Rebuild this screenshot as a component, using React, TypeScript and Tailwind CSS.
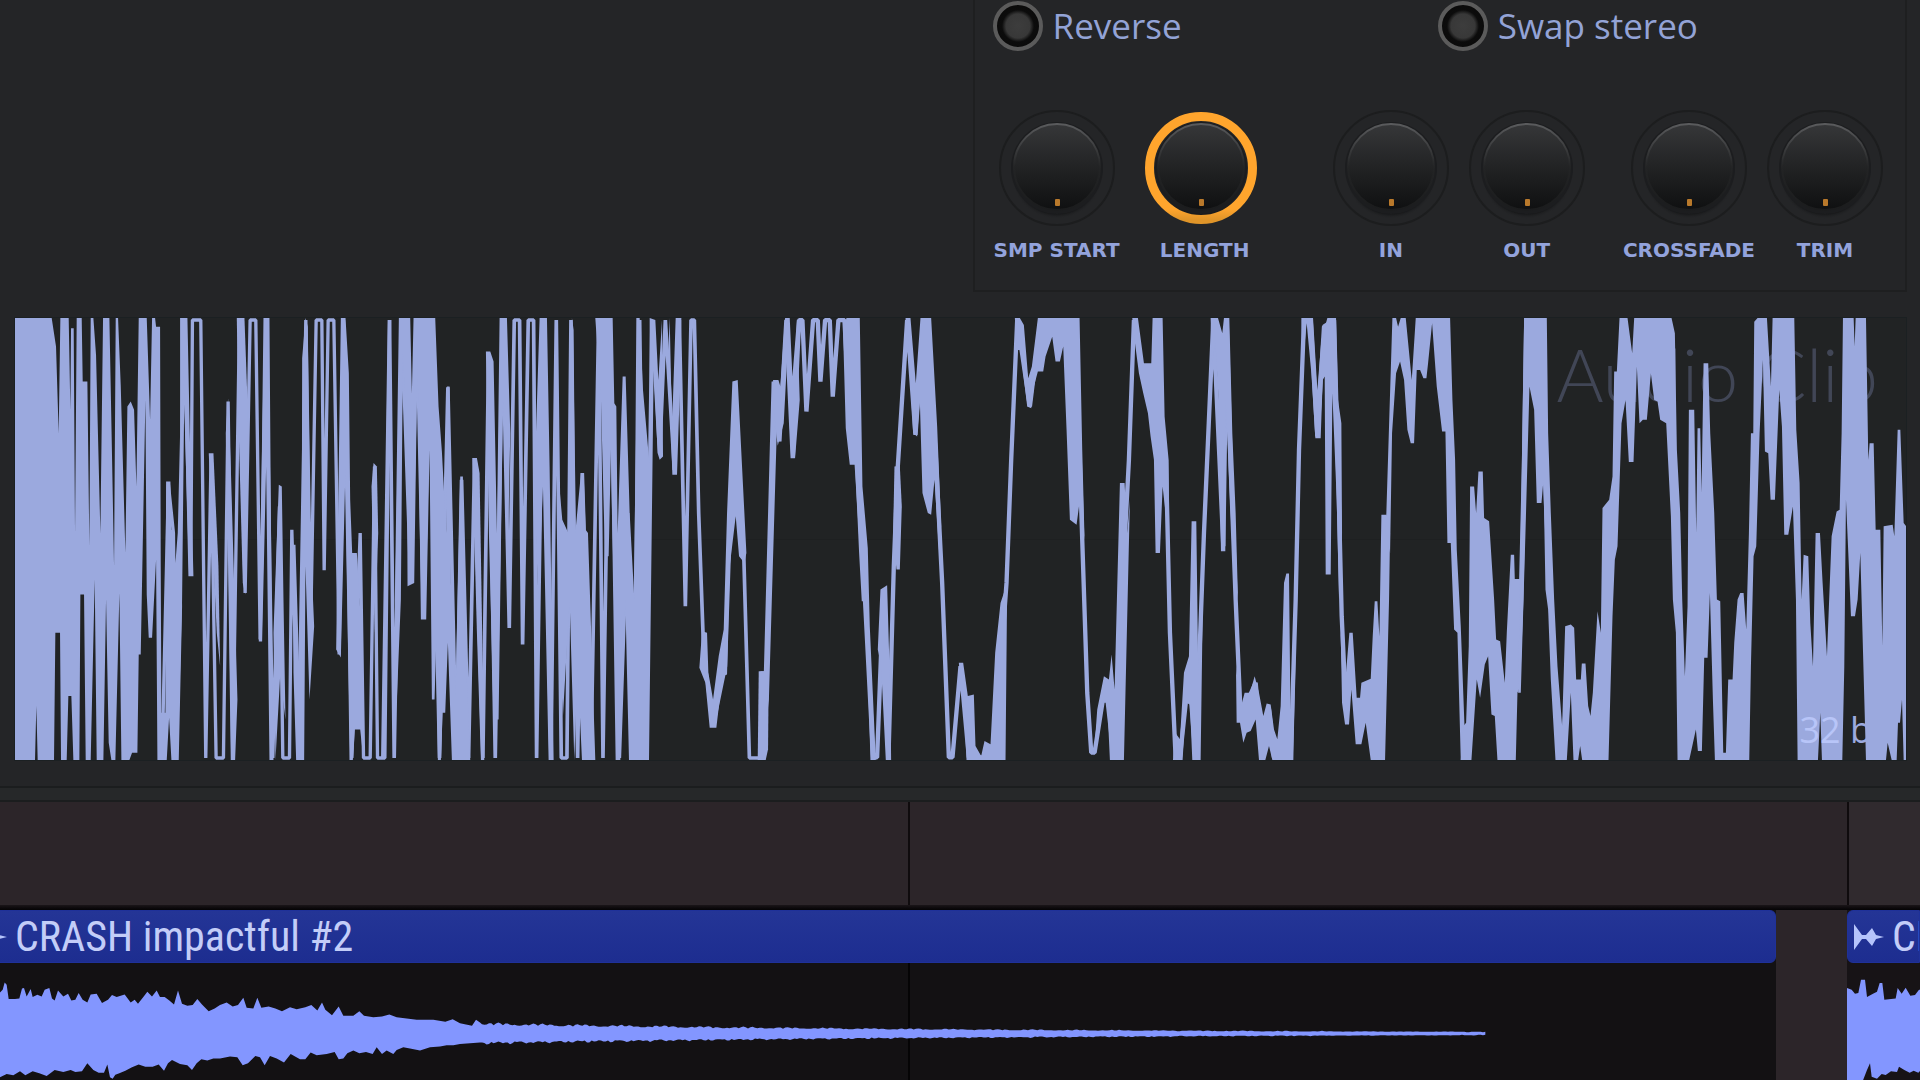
import { useState } from 'react';
import { clsx } from 'clsx';

interface KnobProps {
  label: string;
  active?: boolean;
}

interface WaveSegment {
  x: number;
  stroke: number;
  lines: string;
  shapes: string[];
}

// Sample preview, drawn at three units per pixel. Each segment has its own origin.
const SEGMENTS: WaveSegment[] = [
  {
    x: 0,
    stroke: 10,
    lines:
      '486,1376 505,555 520,700 528,1376 541,900 550,60 572,825 577,60 602,60 617,1376 633,465 648,1376 670,1376 684,305 698,1376 718,60 735,880 750,60 767,60 780,1020 798,60 818,1376 838,620 848,1376 868,1376 875,690 895,1376 917,60 932,960 948,60 965,60 972,812 984,60 1001,60 1017,1065 1030,60 1055,1376 1080,700 1090,1376 1110,1376 1123,500 1132,1376 1154,1376 1168,60',
    shapes: [
      '45,54 155,54 168,140 176,400 181,54 206,54 211,330 213,85 221,85 225,700 230,54 245,54 248,245 262,245 268,740 272,54 280,54 288,165 301,700 309,54 328,54 335,420 342,800 347,54 354,54 362,255 376,760 382,320 392,305 402,330 409,560 416,54 440,54 450,360 456,54 465,54 468,80 480,80 482,800 484,1240 496,1240 498,545 511,545 514,690 519,690 526,790 533,700 540,400 546,920 536,1382 514,1382 507,1255 500,1382 472,1382 468,780 456,1015 446,1015 440,885 436,300 422,1065 416,1065 412,1360 396,1360 388,1382 364,1382 358,880 346,1382 334,1382 326,1330 318,900 310,1382 290,1382 284,840 272,1382 257,1382 252,885 241,885 238,1382 220,1382 214,1190 205,1190 200,1382 183,1382 180,1000 166,1000 162,1382 113,1382 109,1220 105,1382 45,1382',
      '540,54 562,54 569,400 580,830 565,830 550,160 545,700 540,700',
      '626,460 640,460 655,800 660,1100 650,1000 636,700',
      '677,400 684,295 692,500 712,1200 705,1382 692,1382 684,800',
      '710,54 733,54 742,300 740,700 736,885 728,850 716,400',
      '790,54 808,54 814,900 820,1382 808,1382 798,500 786,1026 776,1026 780,900',
      '836,555 845,560 850,900 856,1260 840,1130 826,1382 820,1000',
      '878,735 886,735 897,1100 905,650 906,175 916,54 923,80 930,700 942,980 928,1200 916,800 912,1382 888,1382 880,1120',
      '1022,54 1036,54 1046,220 1050,600 1056,760 1070,760 1084,1000 1090,1382 1080,1290 1064,1290 1058,1382 1048,1382 1036,500 1022,1074 1008,1050',
      '1114,560 1120,490 1130,500 1134,700 1124,1000',
    ],
  },
  {
    x: 380,
    stroke: 11,
    lines:
      '8,1376 28,60 42,1376 65,60 92,850 110,60 130,950 150,60 178,1376 203,262 228,1376 244,540 265,1376 283,480 308,1376 325,160 345,1376 367,60 387,985 402,60 418,60 427,1035 444,60 460,60 469,1376 488,60 512,1376 528,60 543,1376 560,1376 572,60 592,1376 606,520 632,1376 655,60 668,1376 688,60 717,1376 742,640 758,1376 778,60 795,1376 815,60 838,460 855,60 882,510 897,60 915,920 932,60 942,60 955,640 970,1060 998,1280 1035,1100 1045,800 1064,300 1090,760 1107,1376 1140,1376 1160,1200 1188,245',
    shapes: [
      '56,54 90,54 95,280 100,54 165,54 175,320 185,455 198,700 200,260 208,260 212,850 226,1190 240,530 248,530 252,960 270,1382 215,1382 203,1030 195,1240 187,1240 182,1382 173,1382 168,1030 163,1200 155,1200 148,450 138,960 122,960 112,150 102,850 82,860 80,400 68,160 62,900 50,1200 44,900',
      '276,475 290,475 298,520 312,1382 302,1382 290,1000',
      '317,155 330,155 340,185 350,700 358,54 380,54 390,400 384,700 368,300 355,1260 340,1260 326,700',
      '478,54 500,54 508,500 520,1382 505,1382 488,560 474,900 462,560',
      '532,500 546,660 564,700 575,54 580,90 585,700 602,520 610,520 616,690 623,700 645,1382 605,1382 592,1100 582,1382 568,900 548,1250 535,1000',
      '645,54 697,54 702,310 708,320 712,700 727,230 736,230 748,640 762,900 768,54 778,54 788,270 808,500 808,54 825,60 834,240 845,60 848,470 838,480 832,460 820,200 806,1382 746,1382 735,900 720,1382 706,1382 692,450 685,770 674,770 662,300',
      '868,54 875,380 886,54 903,54 900,220 890,525 876,525 864,160',
      '965,995 980,1000 984,1120 998,1200 1015,1070 1030,990 1040,640 1056,245 1072,240 1088,560 1098,760 1092,790 1076,770 1066,650 1048,800 1040,1125 1026,1130 1008,1285 988,1285 975,1150 957,1105',
      '1135,1115 1165,1115 1163,1350 1156,1382 1132,1382',
    ],
  },
  {
    x: 760,
    stroke: 13,
    lines:
      '10,1374 40,245 57,425 78,60 97,475 116,60 126,60 138,335 158,60 172,60 180,245 194,60 208,60 217,290 234,60 252,60 265,300 288,480 310,830 338,1374 350,1374 368,900 384,1374 400,800 412,500 440,60 465,405 490,60 525,450 545,850 565,1374 576,1374 600,1100 625,1374 700,1374 738,850 752,480 770,60 808,320 840,60 905,60 955,400 965,720 980,1180 992,1360 1002,1360 1035,1150 1060,1374 1085,860 1105,480 1120,60',
    shapes: [
      '0,1115 14,1115 26,700 20,1350 12,1382 0,1382',
      '38,240 54,240 60,260 74,54 88,54 96,230 110,54 118,300 104,475 92,475 80,180 70,370 52,438 40,330',
      '258,54 298,54 306,560 322,745 328,980 346,1382 330,1382 316,905 304,905 296,760 284,495 268,495 256,385 248,100',
      '352,1050 360,870 380,857 390,1200 392,1382 376,1382 362,1100',
      '402,500 418,498 424,620 418,810 408,810 398,700',
      '435,54 450,54 466,250 480,54 512,54 530,380 542,680 536,760 522,540 512,645 502,640 486,580 478,300 470,410 458,400 442,90',
      '595,1090 608,1090 622,1190 640,1185 645,1340 662,1370 672,1325 690,1335 704,1060 720,910 740,850 735,1382 618,1382 612,1240 600,1150',
      '763,54 778,54 790,75 803,235 814,200 832,54 957,54 965,450 972,720 958,600 948,675 928,660 918,390 908,140 898,185 885,185 875,110 855,170 848,215 832,215 820,260 812,325 800,320 780,150 768,150',
      '1010,1230 1030,1130 1045,1140 1053,1065 1062,1170 1070,860 1078,550 1092,550 1100,700 1108,600 1090,1382 1048,1382 1040,1210 1028,1210 1000,1370',
    ],
  },
  {
    x: 1140,
    stroke: 13,
    lines:
      '76,480 88,1000 105,1374 118,1374 145,1120 165,1374 190,700 218,60 248,740 258,60 270,500 285,900 300,1250 345,1150 365,1374 385,1230 400,1374 450,1374 465,900 475,450 490,60 510,60 530,410 550,80 580,60 592,500 603,950 615,1210',
    shapes: [
      '-25,54 -8,54 10,190 32,190 36,54 66,54 72,350 84,480 86,740 66,560 58,760 45,760 40,480 30,410 22,340 8,280 -5,220 -18,120',
      '97,1382 104,1300 118,1320 130,1120 145,1070 153,665 167,665 173,1130 188,800 180,1382 155,1382 148,1215 136,1210 126,1382',
      '210,54 232,54 245,100 250,54 266,54 275,400 285,640 292,900 278,800 268,600 255,300 254,755 241,755 234,300 224,120 214,200',
      '286,1100 300,1225 312,1180 328,1180 342,1130 355,1180 368,1250 378,1212 390,1215 400,1290 410,1320 420,1220 430,850 437,822 445,822 450,1300 466,1000 458,1382 395,1382 385,1340 374,1382 355,1382 345,1260 330,1295 318,1300 308,1330 298,1270 288,1270',
      '482,54 517,54 530,270 542,120 560,54 586,54 592,300 602,370 604,700 595,900 588,600 575,280 570,825 555,825 552,230 546,240 540,415 524,415 512,220 498,70 485,200',
      '600,1000 615,1130 626,1000 636,1000 648,1195 658,1195 662,1150 690,1138 696,1010 702,905 710,905 716,1010 722,645 738,645 748,700 745,900 733,1382 690,1382 675,1270 662,1335 645,1335 632,1170 625,1275 613,1275 604,1210',
      '735,700 755,54 766,54 772,80 780,54 795,54 813,240 825,54 928,54 935,300 943,480 948,750 960,980 975,1382 960,1382 950,1000 940,990 930,730 920,730 914,395 904,395 888,260 874,70 862,190 857,235 848,235 838,210 828,210 820,430 810,430 800,390 790,240 778,185 766,220 754,400 748,760',
      '960,1382 968,1280 976,1270 984,1040 988,560 1000,560 1006,640 1013,515 1026,515 1030,655 1045,665 1060,900 1066,1020 1078,1025 1092,1150 1098,1000 1110,765 1120,765 1122,838 1135,838 1143,500 1150,54 1164,54 1156,500 1148,900 1138,1160 1130,1180 1125,1382 1070,1382 1062,1250 1052,1245 1042,1070 1032,1095 1018,1195 1008,1140 992,1382',
    ],
  },
  {
    x: 1520,
    stroke: 12,
    lines: '72,540 88,900 112,1300 124,1374 136,1200',
    shapes: [
      '10,54 78,54 82,400 90,640 100,900 110,1100 124,1280 133,980 150,975 160,985 166,1140 180,1140 183,1092 194,1092 202,1220 209,1250 216,1180 230,935 240,1000 245,625 265,600 275,530 280,215 288,215 296,54 320,54 334,160 340,54 452,54 462,100 468,450 478,640 484,900 492,1130 500,920 504,330 520,330 526,700 530,385 538,385 542,580 548,190 562,190 568,400 580,640 588,900 598,905 607,1360 615,1360 622,1140 635,1140 640,1030 650,900 658,880 668,880 676,990 684,700 690,400 697,400 700,65 710,54 738,54 750,260 755,54 820,54 826,390 836,550 842,900 848,765 862,770 868,970 876,1100 884,700 897,700 905,850 918,1070 932,710 947,635 956,630 962,400 966,54 998,54 1001,140 1004,54 1035,54 1042,480 1046,430 1058,430 1064,690 1078,690 1084,1040 1088,680 1115,675 1120,710 1130,390 1138,390 1148,670 1156,680 1156,1382 1148,1382 1143,1200 1137,1270 1131,1270 1127,1382 1112,1382 1100,1330 1095,1382 1035,1382 1030,1200 1018,760 1010,900 1002,950 990,950 982,760 975,600 970,1100 964,1382 903,1382 898,1240 891,1382 830,1382 825,900 816,620 802,705 790,705 783,380 775,270 762,600 749,600 742,460 732,455 726,180 716,400 706,740 698,770 690,1100 685,1382 582,1382 576,1200 567,880 560,1075 550,1075 543,1355 531,1355 525,1290 505,1382 470,1382 465,1000 456,900 450,650 436,370 418,360 410,305 400,300 390,220 378,360 366,360 356,370 348,200 338,487 324,487 314,300 302,370 290,740 282,780 275,950 263,1382 184,1382 178,1340 172,1382 158,1382 150,1180 138,1382 104,1382 90,1140 82,930 74,870 68,540 62,610 48,610 40,330 26,260 14,700 0,1180 -8,1180 0,700',
    ],
  },
];

// Crash decay: attack outline by hand, the tail tapers off with a little jitter.
const ATTACK_TOP =
  '0,668 8,660 14,638 20,645 26,688 45,688 58,686 66,656 72,655 80,680 92,658 98,682 112,675 125,680 134,660 148,655 156,686 164,692 174,662 190,680 204,672 214,692 226,690 236,670 248,690 262,698 272,674 290,672 306,700 324,690 336,676 350,682 374,674 392,698 404,690 414,702 430,682 442,666 456,680 470,662 480,682 494,682 508,692 522,704 534,662 546,702 562,708 578,706 592,688 606,704 626,724 644,716 660,706 680,698 698,710 714,706 730,684 740,714 760,716 772,684 784,714 806,710 826,716 846,724 870,712 890,718 916,712 934,706 952,722 966,698 976,720 996,736 1016,710 1030,738 1060,738 1078,724 1092,738 1120,742 1146,740 1168,734 1190,742 1220,746 1250,750 1300,750 1336,756 1358,748 1380,760 1416,768 1428,750 1440,758';
const ATTACK_BOTTOM =
  '1440,818 1410,820 1380,822 1360,826 1340,826 1320,830 1290,832 1260,842 1230,836 1210,832 1190,840 1180,852 1160,842 1146,852 1130,832 1118,852 1098,846 1078,850 1060,842 1042,850 1030,866 1016,868 1004,846 980,852 950,856 932,848 916,868 900,868 872,852 852,878 830,866 810,858 794,886 780,862 766,858 744,880 728,886 712,862 690,860 660,866 640,866 622,872 604,868 590,880 576,900 562,886 540,882 516,870 504,880 492,902 476,884 458,890 436,890 416,884 396,892 376,902 358,910 346,914 338,926 330,922 322,884 312,908 296,908 280,900 262,880 246,904 226,906 212,900 190,906 164,900 140,918 118,910 98,904 76,916 60,904 40,916 20,912 0,922';

function buildTail() {
  const top: string[] = [];
  const bottom: string[] = [];
  for (let x = 1446; x <= 4458; x += 7) {
    const t = (x - 1440) / 3018;
    const amp = 5 + 20 * Math.exp(-2.2 * t) - 3 * t;
    const noise = Math.abs(Math.sin(x * 12.9898) * Math.sin(x * 3.71));
    const noise2 = Math.abs(Math.sin(x * 7.233) * Math.cos(x * 1.93));
    top.push(`${x},${Math.round(791 - amp - noise * amp * 0.35)}`);
    bottom.unshift(`${x},${Math.round(791 + amp + noise2 * amp * 0.35)}`);
  }
  return [...top, ...bottom].join(' ');
}

const CRASH_POINTS = `${ATTACK_TOP} ${buildTail()} ${ATTACK_BOTTOM}`;

const CRASH_START_POINTS =
  '0,655 14,660 24,672 34,670 42,630 54,630 60,682 78,672 90,666 98,640 106,640 112,690 146,686 152,655 164,672 176,654 190,678 204,676 216,660 222,660 222,900 214,908 200,902 188,908 172,900 156,890 150,906 132,904 116,915 104,912 90,926 74,920 69,880 60,900 48,931 0,931';

function Toggle({ label }: { label: string }) {
  const [checked, setChecked] = useState(false);
  return (
    <label className="flex h-12 w-fit items-center gap-2.5 text-[35px] leading-12 text-[#93a3d6]">
      <input
        type="checkbox"
        checked={checked}
        onChange={(e) => setChecked(e.target.checked)}
        className="size-[50px] shrink-0 appearance-none rounded-full border-4 border-[#5b5b5b] bg-[radial-gradient(circle,#3d3d3d_0,#383838_12px,#0c0c0c_16px,#080808_100%)] checked:bg-[#ffa52d]"
      />
      {label}
    </label>
  );
}

function Knob({ label, active }: KnobProps) {
  const [value, setValue] = useState(0);
  return (
    <label className="flex flex-col items-center text-[20px] leading-6 font-bold whitespace-nowrap text-[#93a3dc]">
      <input
        type="range"
        value={value}
        onChange={(e) => setValue(Number(e.target.value))}
        className="sr-only"
      />
      <svg viewBox="0 0 120 120" className="mb-2.5 size-[120px]">
        <circle
          cx="60"
          cy="60"
          r="57"
          fill="none"
          stroke={active ? 'none' : '#1c1d1e'}
          strokeWidth="2"
        />
        <circle cx="60" cy="65" r="46" fill="url(#knob-shadow)" />
        {active && (
          <circle
            cx="60"
            cy="60"
            r="51.5"
            fill="none"
            stroke="url(#knob-ring)"
            strokeWidth="9"
          />
        )}
        <circle cx="60" cy="60" r="46" fill="#1c1d1f" />
        <circle
          cx="60"
          cy="59"
          r="43"
          fill="url(#knob-face)"
          stroke="url(#knob-edge)"
          strokeWidth="2"
        />
        <rect x="58" y="91" width="5" height="7" rx="1" fill="#b9792b" />
      </svg>
      <span className={clsx(active && 'pl-2')}>{label}</span>
    </label>
  );
}

function KnobDefs() {
  return (
    <svg className="absolute size-0" aria-hidden="true">
      <defs>
        <linearGradient id="knob-face" x1="0" y1="0" x2="0" y2="1">
          <stop offset="0" stopColor="#363739" />
          <stop offset="0.5" stopColor="#222324" />
          <stop offset="1" stopColor="#0f1011" />
        </linearGradient>
        <linearGradient id="knob-edge" x1="0" y1="0" x2="0" y2="1">
          <stop offset="0" stopColor="#5a5b5d" />
          <stop offset="0.5" stopColor="#232425" />
          <stop offset="1" stopColor="#1b1c1d" />
        </linearGradient>
        <linearGradient id="knob-ring" x1="0" y1="0" x2="0" y2="1">
          <stop offset="0.9" stopColor="#ffa52d" />
          <stop offset="1" stopColor="#e09529" />
        </linearGradient>
        <radialGradient id="knob-shadow">
          <stop offset="0.85" stopColor="#0d0e0f" />
          <stop offset="1" stopColor="#242527" stopOpacity="0" />
        </radialGradient>
      </defs>
    </svg>
  );
}

function SamplePreview() {
  return (
    <div className="relative mr-[13px] ml-3.5 h-[444px] border border-[#1b2022] bg-[#212324]">
      <div className="absolute inset-x-0 top-1/2 h-px bg-[#1e2021]" />
      <span className="absolute top-2 right-7 font-[Lato] text-[72px] leading-24 font-light text-[#414656]">
        Audio Clip
      </span>
      <svg
        viewBox="45 54 5670 1328"
        preserveAspectRatio="none"
        className="relative block size-full"
        fill="#9ba9de"
      >
        {SEGMENTS.map((segment) => (
          <g key={segment.x} transform={`translate(${segment.x * 3} 0)`}>
            <polyline
              points={segment.lines}
              fill="none"
              stroke="#9ba9de"
              strokeWidth={segment.stroke}
              strokeLinejoin="bevel"
            />
            {segment.shapes.map((points) => (
              <polygon key={points} points={points} />
            ))}
          </g>
        ))}
      </svg>
      <span className="absolute right-3 bottom-1.5 text-[36px] leading-12 text-[#b8c5f8]">
        32 <span className="text-[#9ba9de]">bit</span>
      </span>
    </div>
  );
}

function ClipHeader({ name, className }: { name: string; className?: string }) {
  return (
    <div
      className={clsx(
        'h-[53px] overflow-hidden rounded-md border border-[#1f3199] bg-linear-to-b from-[#243596] to-[#1d2d90]',
        className
      )}
    >
      <div className="flex h-full items-center gap-2 pl-1.5 text-[#c3cdf8]">
        <svg viewBox="0 0 30 26" className="h-[26px] w-[30px] shrink-0" fill="#b5c4fb">
          <path d="M0 0 8 11h4l6-7 4 7 8 2-8 2-4 7-6-7H8L0 26Z" />
        </svg>
        <span className="font-['Roboto_Condensed','Liberation_Sans_Narrow',sans-serif] text-[42px] leading-12 whitespace-nowrap">
          {name}
        </span>
      </div>
    </div>
  );
}

function Playlist() {
  return (
    <section className="flex flex-1 flex-col bg-[#2c2529]">
      <div className="flex h-[103px]">
        <div className="flex-[909_1_0%] border-r-2 border-[#0f0b0d]" />
        <div className="flex-[939_1_0%] border-r-2 border-[#0f0b0d]" />
        <div className="w-[71px] bg-[#302a2e]" />
      </div>
      <div className="h-[5px] bg-linear-to-b from-[#1a1518] to-[#050405]" />
      <div className="flex flex-1">
        <div className="mr-[71px] flex flex-1 flex-col overflow-hidden bg-[#131113]">
          <ClipHeader name="CRASH impactful #2" className="-ml-[30px]" />
          <div className="relative flex-1">
            <div className="absolute inset-y-0 left-[51.1%] w-0.5 bg-[#050405]" />
            <svg
              viewBox="0 580 5328 350"
              preserveAspectRatio="none"
              className="relative block h-[117px] w-full"
            >
              <polygon points={CRASH_POINTS} fill="#8396ff" />
            </svg>
          </div>
        </div>
        <div className="flex w-[73px] flex-col overflow-hidden bg-[#171316]">
          <ClipHeader name="CRASH impactful #2" className="rounded-r-none" />
          <svg
            viewBox="0 580 219 350"
            preserveAspectRatio="none"
            className="block h-[117px] w-full"
          >
            <polygon points={CRASH_START_POINTS} fill="#8396ff" />
          </svg>
        </div>
      </div>
    </section>
  );
}

export default function App() {
  return (
    <main className="flex min-h-screen flex-col overflow-hidden bg-[#242527] font-['Open_Sans','Noto_Sans',sans-serif]">
      <KnobDefs />
      <div className="flex justify-end pr-[13px]">
        <section className="h-[292px] w-[49%] border-2 border-t-0 border-[#1e1f20]">
          <div className="grid grid-cols-[445fr_467fr] pt-0.5 pl-[18px]">
            <Toggle label="Reverse" />
            <Toggle label="Swap stereo" />
          </div>
          <div className="mt-[58px] flex justify-between pr-[18px] pl-2.5 font-['DejaVu_Sans',sans-serif]">
            <div className="grid grid-cols-[144px_144px]">
              <Knob label="SMP START" />
              <Knob label="LENGTH" active />
            </div>
            <div className="grid grid-cols-[136px_136px] pl-[30px]">
              <Knob label="IN" />
              <Knob label="OUT" />
            </div>
            <div className="grid grid-cols-[148px_124px]">
              <Knob label="CROSSFADE" />
              <Knob label="TRIM" />
            </div>
          </div>
        </section>
      </div>
      <div className="h-[25px]" />
      <SamplePreview />
      <div className="mt-[25px] h-4 border-y-2 border-[#1b1d1e] bg-[#262829]" />
      <Playlist />
    </main>
  );
}
